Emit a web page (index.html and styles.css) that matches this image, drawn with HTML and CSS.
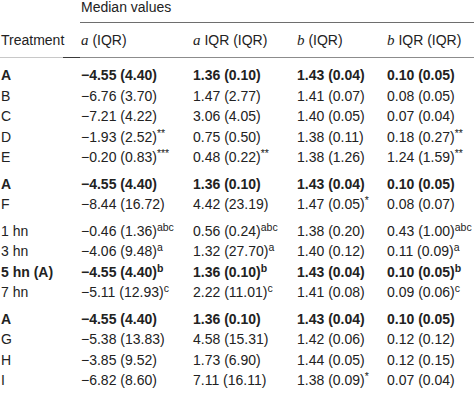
FILE: index.html
```html
<!DOCTYPE html>
<html>
<head>
<meta charset="utf-8">
<link rel="stylesheet" href="styles.css">
</head>
<body>
<table class="tbl">
  <colgroup>
    <col class="c1"><col class="c2"><col class="c3"><col class="c4"><col class="c5">
  </colgroup>
  <thead>
    <tr class="r-top">
      <th class="blank"></th>
      <th class="median" colspan="4">Median values</th>
    </tr>
    <tr class="r-head">
      <th class="treat">Treatment</th>
      <th><i class="v">a</i> (IQR)</th>
      <th><i class="v">a</i> IQR (IQR)</th>
      <th><i class="v">b</i> (IQR)</th>
      <th><i class="v">b</i> IQR (IQR)</th>
    </tr>
  </thead>
  <tbody>
    <tr class="sp-first"><td colspan="5"></td></tr>
    <tr class="b"><td>A</td><td>−4.55 (4.40)</td><td>1.36 (0.10)</td><td>1.43 (0.04)</td><td>0.10 (0.05)</td></tr>
    <tr><td>B</td><td>−6.76 (3.70)</td><td>1.47 (2.77)</td><td>1.41 (0.07)</td><td>0.08 (0.05)</td></tr>
    <tr><td>C</td><td>−7.21 (4.22)</td><td>3.06 (4.05)</td><td>1.40 (0.05)</td><td>0.07 (0.04)</td></tr>
    <tr><td>D</td><td>−1.93 (2.52)<sup>**</sup></td><td>0.75 (0.50)</td><td>1.38 (0.11)</td><td>0.18 (0.27)<sup>**</sup></td></tr>
    <tr><td>E</td><td>−0.20 (0.83)<sup>***</sup></td><td>0.48 (0.22)<sup>**</sup></td><td>1.38 (1.26)</td><td>1.24 (1.59)<sup>**</sup></td></tr>
    <tr class="sp"><td colspan="5"></td></tr>
    <tr class="b"><td>A</td><td>−4.55 (4.40)</td><td>1.36 (0.10)</td><td>1.43 (0.04)</td><td>0.10 (0.05)</td></tr>
    <tr><td>F</td><td>−8.44 (16.72)</td><td>4.42 (23.19)</td><td>1.47 (0.05)<sup>*</sup></td><td>0.08 (0.07)</td></tr>
    <tr class="sp"><td colspan="5"></td></tr>
    <tr><td>1 hn</td><td>−0.46 (1.36)<sup>abc</sup></td><td>0.56 (0.24)<sup>abc</sup></td><td>1.38 (0.20)</td><td>0.43 (1.00)<sup>abc</sup></td></tr>
    <tr><td>3 hn</td><td>−4.06 (9.48)<sup>a</sup></td><td>1.32 (27.70)<sup>a</sup></td><td>1.40 (0.12)</td><td>0.11 (0.09)<sup>a</sup></td></tr>
    <tr class="b"><td>5 hn (A)</td><td>−4.55 (4.40)<sup>b</sup></td><td>1.36 (0.10)<sup>b</sup></td><td>1.43 (0.04)</td><td>0.10 (0.05)<sup>b</sup></td></tr>
    <tr><td>7 hn</td><td>−5.11 (12.93)<sup>c</sup></td><td>2.22 (11.01)<sup>c</sup></td><td>1.41 (0.08)</td><td>0.09 (0.06)<sup>c</sup></td></tr>
    <tr class="sp"><td colspan="5"></td></tr>
    <tr class="b"><td>A</td><td>−4.55 (4.40)</td><td>1.36 (0.10)</td><td>1.43 (0.04)</td><td>0.10 (0.05)</td></tr>
    <tr><td>G</td><td>−5.38 (13.83)</td><td>4.58 (15.31)</td><td>1.42 (0.06)</td><td>0.12 (0.12)</td></tr>
    <tr><td>H</td><td>−3.85 (9.52)</td><td>1.73 (6.90)</td><td>1.44 (0.05)</td><td>0.12 (0.15)</td></tr>
    <tr><td>I</td><td>−6.82 (8.60)</td><td>7.11 (16.11)</td><td>1.38 (0.09)<sup>*</sup></td><td>0.07 (0.04)</td></tr>
  </tbody>
</table>
</body>
</html>
```
FILE: styles.css
```css
html, body {
  margin: 0;
  padding: 0;
  background: #ffffff;
}
body {
  width: 474px;
  height: 414px;
  overflow: hidden;
  font-family: "Liberation Sans", Arial, sans-serif;
  font-size: 14px;
  color: #222222;
}
.tbl {
  table-layout: fixed;
  border-collapse: separate;
  border-spacing: 0;
  width: 474px;
  margin-top: -4px;
}
.c1 { width: 80px; }
.c2 { width: 112px; }
.c3 { width: 104px; }
.c4 { width: 90px; }
.c5 { width: 88px; }
th, td {
  padding: 0 0 0 1px;
  text-align: left;
  font-weight: normal;
  white-space: nowrap;
  line-height: 16px;
}
.r-top th {
  height: 23px;
  vertical-align: top;
  padding-top: 3px;
}
.median {
  border-bottom: 1px solid #6e6e6e;
}
.r-head th {
  height: 34px;
  vertical-align: middle;
  border-bottom: 1px solid #8c8c8c;
}
.r-head th.treat {
  border-bottom: 0;
  padding-bottom: 1px;
  background:
    linear-gradient(#3a3a3a, #3a3a3a) right bottom / 17px 1px no-repeat,
    linear-gradient(#c8c8c8, #c8c8c8) left bottom / 100% 1px no-repeat;
}
.v {
  font-family: "Liberation Serif", "Times New Roman", serif;
  font-style: italic;
  font-size: 15px;
}
tbody td {
  height: 20.5px;
  padding-top: 0;
  padding-bottom: 0;
  vertical-align: middle;
}
tbody tr.sp td {
  height: 6px;
  line-height: 0;
  font-size: 0;
}
tbody tr.sp-first td {
  height: 7px;
  line-height: 0;
  font-size: 0;
}
tr.b td {
  font-weight: bold;
}
sup {
  font-size: 10.5px;
  line-height: 0;
  vertical-align: 5px;
}
```
